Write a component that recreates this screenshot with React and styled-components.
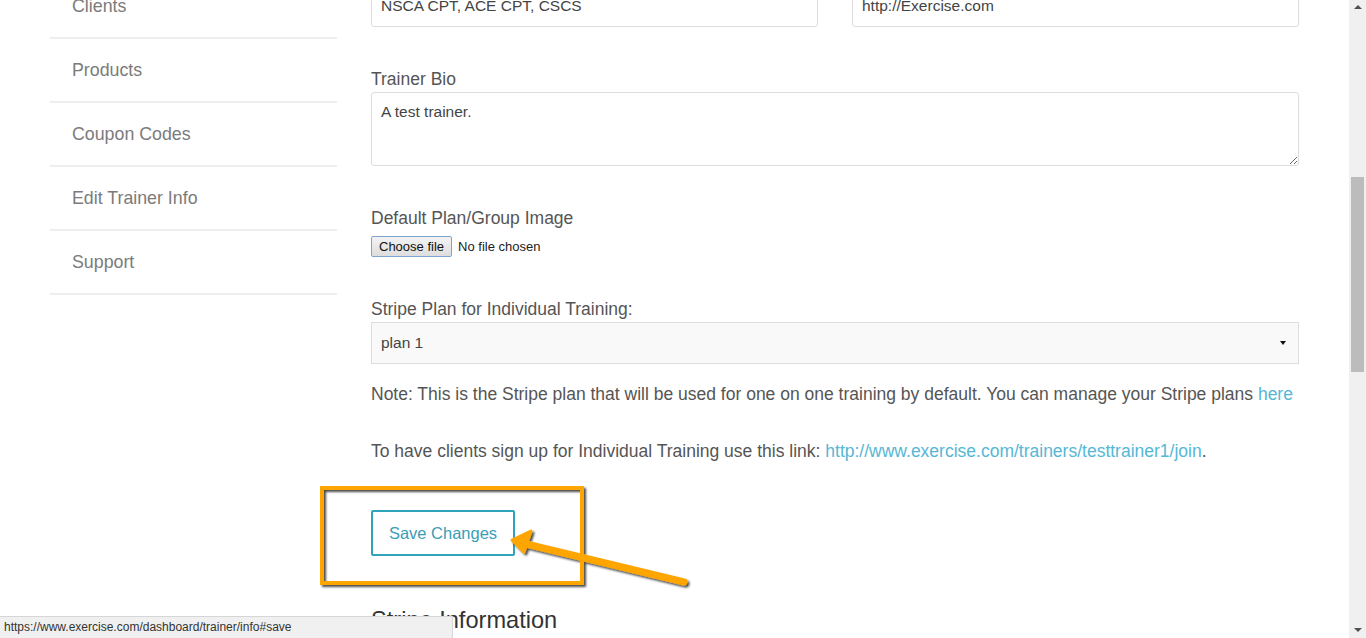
import React from 'react';
import styled, { createGlobalStyle } from 'styled-components';

const GlobalStyle = createGlobalStyle`
  html, body {
    margin: 0;
    padding: 0;
    background: #fff;
    overflow: hidden;
  }
  body {
    font-family: "Liberation Sans", Arial, Helvetica, sans-serif;
    color: #555;
  }
`;

const Viewport = styled.div`
  position: relative;
  display: flex;
  width: 1366px;
  height: 638px;
  overflow: hidden;
`;

const Page = styled.div`
  flex: 1;
  display: flex;
  align-items: flex-start;
  gap: 34px;
  padding: 0 50px;
`;

const Sidebar = styled.ul`
  list-style: none;
  margin: -25px 0 0;
  padding: 0;
  width: 287px;
  flex-shrink: 0;
`;

const NavItem = styled.li`
  height: 62px;
  display: flex;
  align-items: center;
  padding-left: 22px;
  border-bottom: 2px solid #eee;
  font-size: 17.8px;
  color: #7b7b7b;
`;

const Main = styled.div`
  flex: 1;
  display: flex;
  flex-direction: column;
  margin-top: -15px;
`;

const TwoCol = styled.div`
  display: grid;
  grid-template-columns: 1fr 1fr;
  gap: 34px;
`;

const TextInput = styled.input`
  box-sizing: border-box;
  height: 42px;
  width: 100%;
  padding: 0 9px;
  border: 1px solid #ddd;
  border-radius: 3px;
  font: 15.5px "Liberation Sans", Arial, sans-serif;
  color: #444;
  background: #fff;
  outline: none;
`;

const Field = styled.div`
  display: flex;
  flex-direction: column;
  margin-top: ${(p) => p.$top || 40}px;
`;

const Label = styled.label`
  font-size: 17.5px;
  line-height: 24px;
  color: #555;
  margin-bottom: ${(p) => p.$gap || 1}px;
`;

const Bio = styled.textarea`
  box-sizing: border-box;
  height: 74px;
  width: 100%;
  padding: 8px 9px;
  border: 1px solid #ddd;
  border-radius: 3px;
  font: 15.5px/1.4 "Liberation Sans", Arial, sans-serif;
  color: #444;
  outline: none;
  resize: vertical;
`;

const FileRow = styled.div`
  display: flex;
  align-items: center;
  gap: 6px;
  font: 13px "Liberation Sans", Arial, sans-serif;
  color: #222;
`;

const FileButton = styled.button`
  box-sizing: border-box;
  height: 21px;
  padding: 0 7px;
  border: 1px solid #7fa3cf;
  border-radius: 2px;
  background: linear-gradient(#f3f3f3, #dedede);
  font: 13px "Liberation Sans", Arial, sans-serif;
  color: #111;
`;

const SelectBox = styled.div`
  box-sizing: border-box;
  height: 42px;
  display: flex;
  align-items: center;
  justify-content: space-between;
  padding: 0 12px 0 9px;
  border: 1px solid #ddd;
  background: #f9f9f9;
  font-size: 15.5px;
  color: #444;
`;

const Caret = styled.span`
  width: 0;
  height: 0;
  border-left: 3px solid transparent;
  border-right: 3px solid transparent;
  border-top: 4px solid #111;
`;

const Para = styled.p`
  margin: ${(p) => p.$top}px 0 0;
  font-size: 17.5px;
  line-height: 24px;
  color: #555;
  white-space: nowrap;
`;

const Link = styled.a`
  color: #56b7d5;
  text-decoration: none;
`;

const SaveButton = styled.button`
  align-self: flex-start;
  box-sizing: border-box;
  margin-top: 47px;
  width: 144px;
  height: 46px;
  border: 2px solid #2fa3b9;
  border-radius: 2px;
  background: #fff;
  font: 16.5px "Liberation Sans", Arial, sans-serif;
  color: #3a9db6;
`;

const Heading = styled.h3`
  margin: 51px 0 0;
  font-size: 23.6px;
  font-weight: normal;
  line-height: 26px;
  color: #333;
`;

const Scrollbar = styled.div`
  width: 17px;
  flex-shrink: 0;
  background: #f0f0f0;
  display: flex;
  flex-direction: column;
  align-items: center;
`;

const ScrollArrow = styled.div`
  width: 0;
  height: 0;
  margin: ${(p) => (p.$down ? 'auto 0 6px' : '5px 0 0')};
  border-left: 4px solid transparent;
  border-right: 4px solid transparent;
  ${(p) => (p.$down ? 'border-top: 4px solid #505050;' : 'border-bottom: 4px solid #505050;')}
`;

const Thumb = styled.div`
  width: 13px;
  height: 195px;
  margin-top: 168px;
  background: #bcbcbc;
`;

const StatusBar = styled.div`
  position: absolute;
  left: 0;
  bottom: 0;
  width: 453px;
  height: 22px;
  box-sizing: border-box;
  padding: 3px 0 0 4px;
  background: #f0f0f0;
  border-top: 1px solid #d6d6d6;
  border-right: 1px solid #d6d6d6;
  font: 12px "Liberation Sans", Arial, sans-serif;
  color: #333;
`;

const Annotation = styled.svg`
  position: absolute;
  left: 0;
  top: 0;
  pointer-events: none;
`;

const nav = ['Clients', 'Products', 'Coupon Codes', 'Edit Trainer Info', 'Support'];

export default function App() {
  return (
    <>
      <GlobalStyle />
      <Viewport>
        <Page>
          <Sidebar>
            {nav.map((n) => (
              <NavItem key={n}>{n}</NavItem>
            ))}
          </Sidebar>
          <Main>
            <TwoCol>
              <TextInput readOnly value="NSCA CPT, ACE CPT, CSCS" />
              <TextInput readOnly value="http://Exercise.com" />
            </TwoCol>
            <Field>
              <Label>Trainer Bio</Label>
              <Bio readOnly defaultValue="A test trainer." />
            </Field>
            <Field>
              <Label $gap={6}>Default Plan/Group Image</Label>
              <FileRow>
                <FileButton>Choose file</FileButton>
                <span>No file chosen</span>
              </FileRow>
            </Field>
            <Field>
              <Label>Stripe Plan for Individual Training:</Label>
              <SelectBox>
                plan 1
                <Caret />
              </SelectBox>
            </Field>
            <Para $top={18}>
              Note: This is the Stripe plan that will be used for one on one training by default. You can manage your
              Stripe plans <Link href="#">here</Link>
            </Para>
            <Para $top={33}>
              To have clients sign up for Individual Training use this link:{' '}
              <Link href="#">http://www.exercise.com/trainers/testtrainer1/join</Link>.
            </Para>
            <SaveButton>Save Changes</SaveButton>
            <Heading>Stripe Information</Heading>
          </Main>
        </Page>
        <Scrollbar>
          <ScrollArrow />
          <Thumb />
          <ScrollArrow $down />
        </Scrollbar>
        <Annotation width="1366" height="638" viewBox="0 0 1366 638">
          <defs>
            <filter id="shadow" x="-10%" y="-10%" width="120%" height="120%">
              <feDropShadow dx="2" dy="2" stdDeviation="1" floodColor="#000" floodOpacity="0.7" />
            </filter>
          </defs>
          <g filter="url(#shadow)" fill="none" stroke="#ffa500">
            <rect x="322" y="488" width="260" height="95" strokeWidth="4" />
            <line x1="684" y1="582" x2="522" y2="543" strokeWidth="7" strokeLinecap="round" />
            <path d="M512 540 L531 531 L524 552 Z" fill="#ffa500" strokeWidth="3" strokeLinejoin="round" />
          </g>
        </Annotation>
        <StatusBar>https://www.exercise.com/dashboard/trainer/info#save</StatusBar>
      </Viewport>
    </>
  );
}
